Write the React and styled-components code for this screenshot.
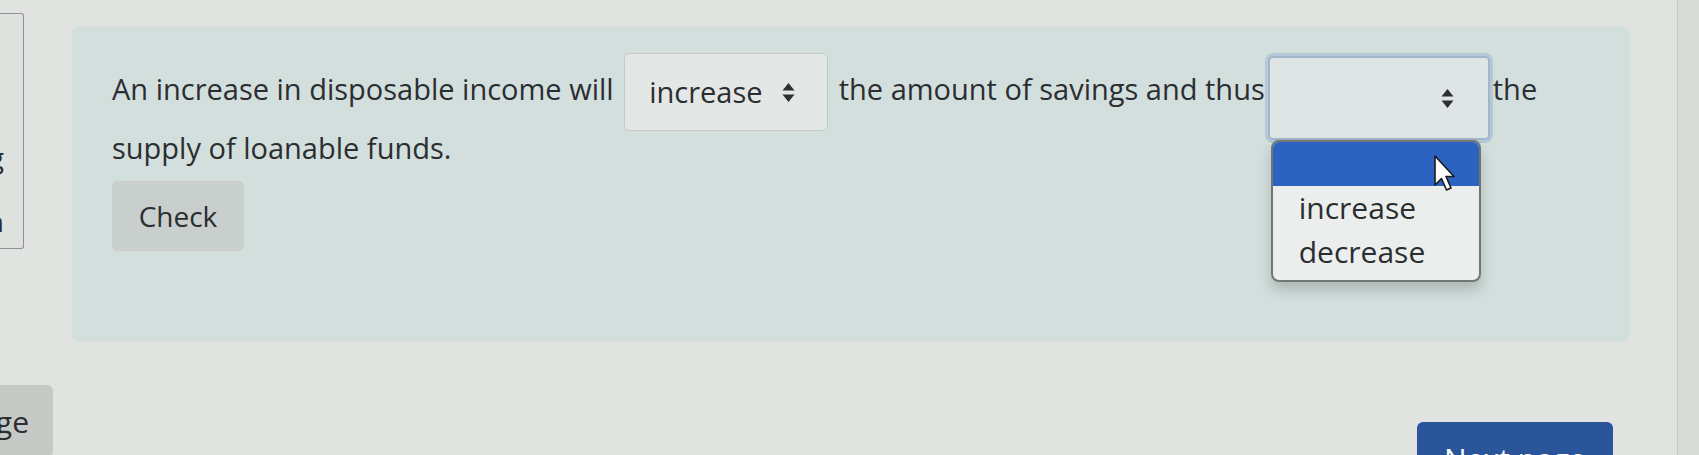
import React from 'react';
import styled, { createGlobalStyle, css } from 'styled-components';

const GlobalStyle = createGlobalStyle`
  html, body {
    margin: 0;
    padding: 0;
    background: #dcdedb;
  }
  body {
    font-family: "Open Sans", "Noto Sans", sans-serif;
    color: #2b2e31;
    overflow: hidden;
  }
`;

const Page = styled.div`
  display: flex;
  width: 1699px;
  height: 455px;
  overflow: hidden;
`;

const Main = styled.div`
  flex: 1;
  display: flex;
  flex-direction: column;
  padding-right: 47px;
  background: #e1e3e0;
`;

const Gutter = styled.div`
  width: 21px;
  border-left: 1px solid #c6c8c5;
  background: #d9dbd8;
`;

const TopRow = styled.div`
  display: flex;
  align-items: flex-start;
`;

const SideTab = styled.div`
  box-sizing: border-box;
  width: 24px;
  height: 236px;
  margin-top: 13px;
  padding-top: 126px;
  display: flex;
  flex-direction: column;
  align-items: flex-end;
  gap: 30px;
  overflow: hidden;
  border: 1px solid #8e918f;
  border-left: none;
  border-radius: 0 3px 3px 0;
  background: #dfe1de;
  font-size: 28px;
  line-height: 34px;
`;

const TabLabel = styled.span`
  margin-right: 19px;
  white-space: nowrap;
`;

const Panel = styled.section`
  flex: 1;
  box-sizing: border-box;
  height: 316px;
  margin: 26px 0 0 48px;
  padding: 27px 40px 0 40px;
  border-radius: 8px;
  background: #d3dfdd;
`;

const Question = styled.p`
  margin: 0;
  font-size: 29px;
  line-height: 34px;
`;

const SelectBox = styled.span`
  position: relative;
  display: inline-flex;
  align-items: center;
  justify-content: space-between;
  box-sizing: border-box;
  width: ${(p) => p.$width}px;
  height: 78px;
  margin: 0 3px;
  padding: 0 ${(p) => p.$padRight}px 0 24px;
  vertical-align: middle;
  border: 1px solid #c3c9c7;
  border-radius: 5px;
  background: #e3e7e5;
  ${(p) =>
    p.$focused &&
    css`
      height: 84px;
      margin-bottom: -12px;
      border: 2px solid #a3b6c6;
      box-shadow: 0 0 0 3px #b5c8d8;
      background: #dfe5e4;
    `}
`;

const Dropdown = styled.ul`
  position: absolute;
  top: calc(100% + 2px);
  left: 1px;
  width: 210px;
  box-sizing: border-box;
  margin: 0;
  padding: 0 0 6px;
  list-style: none;
  border: 2px solid #727775;
  border-radius: 8px;
  background: #eceeed;
  box-shadow: 0 8px 14px rgba(0, 0, 0, 0.18);
  overflow: hidden;
  font-size: 30px;
  line-height: 44px;
  z-index: 2;
`;

const Option = styled.li`
  height: 44px;
  padding-left: 26px;
  ${(p) =>
    p.$active &&
    css`
      background: #2c63c1;
    `}
`;

const Cursor = styled.svg`
  position: absolute;
  left: 160px;
  top: 12px;
  z-index: 3;
`;

const CheckButton = styled.button`
  display: block;
  box-sizing: border-box;
  width: 132px;
  height: 70px;
  margin-top: 16px;
  padding: 0;
  border: none;
  border-radius: 5px;
  background: #c9cfcd;
  color: #2b2e31;
  font-family: inherit;
  font-size: 28px;
`;

const BottomRow = styled.div`
  display: flex;
  justify-content: space-between;
  align-items: flex-start;
  margin-top: 43px;
`;

const PrevClip = styled.div`
  display: flex;
  justify-content: flex-end;
  width: 53px;
  overflow: hidden;
`;

const NavButton = styled.button`
  flex: none;
  box-sizing: border-box;
  height: 72px;
  padding: 0 24px;
  border: none;
  border-radius: 6px;
  font-family: inherit;
  font-size: 30px;
  white-space: nowrap;
  ${(p) =>
    p.$primary
      ? css`
          width: 196px;
          margin: 37px 17px 0 0;
          background: #2b559a;
          color: #ffffff;
        `
      : css`
          background: #c7c9c6;
          color: #2b2e31;
        `}
`;

function UpDown() {
  return (
    <svg width="13" height="21" viewBox="0 0 13 21">
      <path d="M6.5 1 L12.5 8.5 L0.5 8.5 Z" fill="#2d3033" />
      <path d="M6.5 20 L12.5 12.5 L0.5 12.5 Z" fill="#2d3033" />
    </svg>
  );
}

export default function App() {
  return (
    <>
      <GlobalStyle />
      <Page>
        <Main>
          <TopRow>
            <SideTab>
              <TabLabel>g</TabLabel>
              <TabLabel>n</TabLabel>
            </SideTab>
            <Panel>
              <Question>
                An increase in disposable income will{' '}
                <SelectBox $width={204} $padRight={32}>
                  increase
                  <UpDown />
                </SelectBox>{' '}
                the amount of savings and thus
                <SelectBox $width={222} $padRight={34} $focused>
                  <span />
                  <UpDown />
                  <Dropdown>
                    <Option $active>
                      <Cursor width="22" height="40" viewBox="0 0 22 40">
                        <path
                          d="M2 2 L2 31 L8.5 24.5 L13.5 36 L18 34 L13 22.5 L21 22.5 Z"
                          fill="#ffffff"
                          stroke="#1a1a1a"
                          strokeWidth="1.6"
                          strokeLinejoin="round"
                        />
                      </Cursor>
                    </Option>
                    <Option>increase</Option>
                    <Option>decrease</Option>
                  </Dropdown>
                </SelectBox>
                the supply of loanable funds.
              </Question>
              <CheckButton>Check</CheckButton>
            </Panel>
          </TopRow>
          <BottomRow>
            <PrevClip>
              <NavButton>Previous page</NavButton>
            </PrevClip>
            <NavButton $primary>Next page</NavButton>
          </BottomRow>
        </Main>
        <Gutter />
      </Page>
    </>
  );
}
